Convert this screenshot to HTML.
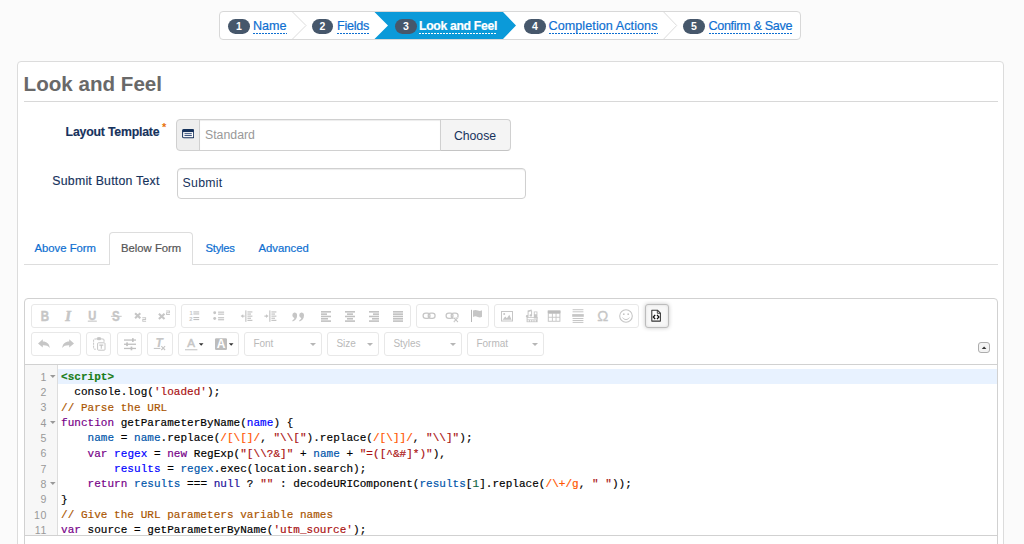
<!DOCTYPE html>
<html>
<head>
<meta charset="utf-8">
<style>
*{box-sizing:border-box;margin:0;padding:0}
html,body{width:1024px;height:544px;overflow:hidden;background:#fbfbfb;font-family:"Liberation Sans",sans-serif;font-size:13px;color:#16325c}
.abs{position:absolute}
/* wizard */
#wiz{position:absolute;left:219px;top:11px;width:582px;height:29px;border:1px solid #d8d8d8;border-radius:4px;background:#fff;overflow:hidden}
#wiz svg{position:absolute;left:0;top:0}
.badge{position:absolute;top:7.3px;width:21.6px;height:14.7px;border-radius:7.4px;background:#46576b;color:#fff;font-size:10.5px;font-weight:bold;text-align:center;line-height:14.7px}
.st{-webkit-text-stroke:0.2px;position:absolute;top:5px;font-size:12.6px;color:#0e6fd1;line-height:18.6px;white-space:nowrap;height:17px;background:repeating-linear-gradient(90deg,#0e6fd1 0,#0e6fd1 2px,transparent 2px,transparent 3px) left bottom/100% 1px no-repeat}
.st.act{color:#fff;font-weight:bold;background-image:repeating-linear-gradient(90deg,#fff 0,#fff 2px,transparent 2px,transparent 3px)}
/* panel */
#panel{position:absolute;left:17px;top:61px;width:987px;height:520px;border:1px solid #dcdcdc;border-radius:4px;background:#fff}
h1{position:absolute;left:4.6px;top:8.6px;font-size:20.6px;font-weight:bold;color:#696969;line-height:26px;white-space:nowrap}
.hr{position:absolute;left:5px;top:39px;width:974px;height:1px;background:#d8d8d8}
.lbl{-webkit-text-stroke:0.15px;position:absolute;right:843px;font-size:12.3px;white-space:nowrap;color:#16325c}
.inp{position:absolute;border:1px solid #d0d0d0;border-radius:4px;background:#fff;box-shadow:inset 0 1px 1px rgba(0,0,0,.075)}
/* tabs */
.tab{-webkit-text-stroke:0.2px;position:absolute;font-size:11.3px;color:#0e6fd1;white-space:nowrap;top:179px;line-height:14px}
/* editor */
#ed{position:absolute;left:5px;top:236px;width:974px;height:300px;border:1px solid #d1d1d1;border-radius:4px;background:#fff;overflow:hidden}
.grp{position:absolute;height:24px;border:1px solid #e8e8e8;border-radius:3px;background:#fff}
.combo{position:absolute;height:24px;border:1px solid #e8e8e8;border-radius:3px;background:#fff;font-size:10px;color:#b9b9b9;line-height:22.8px;padding-left:8.4px}
.combo i{position:absolute;right:5px;top:10px;width:0;height:0;border-left:3px solid transparent;border-right:3px solid transparent;border-top:3px solid #b6b6b6}
#ace{position:absolute;left:0;top:65px;width:972px;height:172px;border-top:1px solid #d1d1d1;border-bottom:1px solid #d1d1d1;background:#fff;font-family:"Liberation Mono",monospace;font-size:11px}
#gut{position:absolute;left:0;top:0;width:33px;height:100%;background:#f7f7f7;border-right:1px solid #ddd}
.ln{-webkit-text-stroke:0.18px;letter-spacing:0.035px;position:absolute;left:36px;height:15.33px;line-height:15.33px;white-space:pre;color:#000}
.gn{position:absolute;left:0;width:21.8px;text-align:right;height:15.33px;line-height:15.33px;color:#999;font-family:"Liberation Sans",sans-serif;font-size:10.6px;letter-spacing:.5px}
.k{color:#708}.d{color:#00f}.v{color:#05a}.s{color:#a11}.c{color:#a50}.r{color:#f50}.t{color:#1a7d1a;font-weight:bold}.n{color:#164}.a{color:#219}
</style>
</head>
<body>
<div id="wiz">
<svg width="580" height="27" viewBox="0 0 580 27">
<polyline points="72.5,0 86,13.5 72.5,27" fill="none" stroke="#dcdcdc" stroke-width="1"/>
<polygon points="154.5,0 283,0 296,13.5 283,27 154.5,27 168,13.5" fill="#0b9ad9"/>
<polyline points="443.7,0 456.7,13.5 443.7,27" fill="none" stroke="#dcdcdc" stroke-width="1"/>
</svg>
<div class="badge" style="left:8px">1</div><div class="st" style="left:33px">Name</div>
<div class="badge" style="left:91.5px">2</div><div class="st" style="left:117px;letter-spacing:-0.27px">Fields</div>
<div class="badge" style="left:175px">3</div><div class="st act" style="left:199px;font-size:12.2px;letter-spacing:-0.3px">Look and Feel</div>
<div class="badge" style="left:304px">4</div><div class="st" style="left:328.5px;letter-spacing:0.07px">Completion Actions</div>
<div class="badge" style="left:463px">5</div><div class="st" style="left:488.5px;letter-spacing:-0.33px">Confirm &amp; Save</div>
</div>
<div id="panel"><div class="abs" style="left:1px;top:0;width:984px;height:500px">
<h1>Look and Feel</h1>
<div class="hr"></div>
<div class="lbl" style="top:62px;font-weight:bold;line-height:16px;letter-spacing:-0.2px;right:843.6px">Layout Template</div>
<div class="abs" style="left:143px;top:59px;color:#e8720c;font-size:11px;line-height:12px;font-weight:bold">*</div>
<div class="abs" id="ig" style="left:157px;top:57px;width:335px;height:32px">
 <div class="abs" style="left:0;top:0;width:24px;height:32px;border:1px solid #d0d0d0;border-radius:4px 0 0 4px;background:#eee"></div>
 <svg class="abs" style="left:5.6px;top:10.4px" width="12.3" height="9.4" viewBox="0 0 13 10"><rect x="0.6" y="0.6" width="11.8" height="8.8" rx="1.2" fill="#fff" stroke="#16325c" stroke-width="1.1"/><rect x="0.6" y="0.6" width="11.8" height="2.7" fill="#16325c"/><rect x="2.6" y="4.4" width="7.8" height="1.1" fill="#3d5580"/><rect x="2.6" y="6.4" width="7.8" height="1.1" fill="#3d5580"/></svg>
 <div class="inp" style="left:23px;top:0;width:242px;height:32px;border-radius:0;color:#999;font-size:12.3px;line-height:31.6px;padding-left:5px">Standard</div>
 <div class="abs" style="left:264px;top:0;width:71px;height:32px;border:1px solid #d0d0d0;border-bottom-color:#c4c4c4;border-radius:0 4px 4px 0;background:#f4f4f4;font-size:12.25px;line-height:33.4px;padding-right:1px;text-align:center;color:#16325c">Choose</div>
</div>
<div class="lbl" style="top:111px;line-height:16px;letter-spacing:0.24px;right:843.4px">Submit Button Text</div>
<div class="inp" style="left:158px;top:106px;width:349px;height:31px;font-size:12.3px;line-height:29.6px;padding-left:4.5px;letter-spacing:.3px;color:#16325c">Submit</div>
<div class="abs" style="left:5px;top:202px;width:974px;height:1px;background:#ddd"></div>
<div class="abs" style="left:90px;top:170px;width:84px;height:33px;border:1px solid #ddd;border-bottom:0;border-radius:4px 4px 0 0;background:#fff"></div>
<div class="tab" style="left:15.5px">Above Form</div>
<div class="tab" style="left:102px;color:#555">Below Form</div>
<div class="tab" style="left:186.5px;letter-spacing:-0.25px">Styles</div>
<div class="tab" style="left:239.5px">Advanced</div>
<div id="ed">
<!--TB-->
<div class="grp" style="left:6px;top:5px;width:145px"></div>
<div class="grp" style="left:156px;top:5px;width:230px"></div>
<div class="grp" style="left:391px;top:5px;width:73px"></div>
<div class="grp" style="left:469px;top:5px;width:145px"></div>
<div class="grp" style="left:6px;top:33px;width:50px"></div>
<div class="grp" style="left:61px;top:33px;width:25px"></div>
<div class="grp" style="left:92px;top:33px;width:25px"></div>
<div class="grp" style="left:122px;top:33px;width:26px"></div>
<div class="grp" style="left:153px;top:33px;width:61px"></div>
<svg class="abs" style="left:213.7px;top:9.0px" width="16" height="16" viewBox="0 0 16 16" fill="#c6c6c6" stroke="none"><g fill="#c0c0c0"><rect x="6.3" y="2.4" width="1.1" height="11.4"/><rect x="8.4" y="3.4" width="5" height="1.1"/><rect x="8.4" y="5.5" width="3.6" height="1.1"/><rect x="8.4" y="7.6" width="5" height="1.1"/><rect x="8.4" y="9.7" width="3.6" height="1.1"/><rect x="8.4" y="11.8" width="5" height="1.1"/></g><path d="M1.6 8.1 L4.2 6.2 V7.5 H5.6 V8.7 H4.2 V10 Z"/></svg>
<svg class="abs" style="left:237.8px;top:9.0px" width="16" height="16" viewBox="0 0 16 16" fill="#c6c6c6" stroke="none"><g fill="#c0c0c0"><rect x="6.3" y="2.4" width="1.1" height="11.4"/><rect x="8.4" y="3.4" width="5" height="1.1"/><rect x="8.4" y="5.5" width="3.6" height="1.1"/><rect x="8.4" y="7.6" width="5" height="1.1"/><rect x="8.4" y="9.7" width="3.6" height="1.1"/><rect x="8.4" y="11.8" width="5" height="1.1"/></g><path d="M5.6 8.1 L3 6.2 V7.5 H1.4 V8.7 H3 V10 Z"/></svg>
<svg class="abs" style="left:265.2px;top:9.8px" width="16" height="16" viewBox="0 0 16 16" fill="#c6c6c6" stroke="none"><path d="M4.300000000000001 3.6 a2.8 2.8 0 0 1 2.8 2.9 c0 3 -1.7 5 -4.4 5.9 l-.5 -1 c1.3 -.7 2 -1.5 2.2 -2.5 a2.75 2.75 0 0 1 -.1 -5.3 z"/><path d="M11.2 3.6 a2.8 2.8 0 0 1 2.8 2.9 c0 3 -1.7 5 -4.4 5.9 l-.5 -1 c1.3 -.7 2 -1.5 2.2 -2.5 a2.75 2.75 0 0 1 -.1 -5.3 z"/></svg>
<svg class="abs" style="left:293.2px;top:9.0px" width="16" height="16" viewBox="0 0 16 16" fill="#c0c0c0" stroke="none"><rect x="3" y="3.05" width="10" height="1.55"/><rect x="3" y="5.37" width="6" height="1.55"/><rect x="3" y="7.69" width="10" height="1.55"/><rect x="3" y="10.01" width="7" height="1.55"/><rect x="3" y="12.33" width="10" height="1.55"/></svg>
<svg class="abs" style="left:317.0px;top:9.0px" width="16" height="16" viewBox="0 0 16 16" fill="#c0c0c0" stroke="none"><rect x="3" y="3.05" width="10" height="1.55"/><rect x="5" y="5.37" width="6" height="1.55"/><rect x="3" y="7.69" width="10" height="1.55"/><rect x="5" y="10.01" width="6" height="1.55"/><rect x="3" y="12.33" width="10" height="1.55"/></svg>
<svg class="abs" style="left:341.0px;top:9.0px" width="16" height="16" viewBox="0 0 16 16" fill="#c0c0c0" stroke="none"><rect x="3" y="3.05" width="10" height="1.55"/><rect x="7" y="5.37" width="6" height="1.55"/><rect x="3" y="7.69" width="10" height="1.55"/><rect x="6" y="10.01" width="7" height="1.55"/><rect x="3" y="12.33" width="10" height="1.55"/></svg>
<svg class="abs" style="left:364.7px;top:9.0px" width="16" height="16" viewBox="0 0 16 16" fill="#c0c0c0" stroke="none"><rect x="3" y="3.05" width="10" height="1.55"/><rect x="3" y="5.37" width="10" height="1.55"/><rect x="3" y="7.69" width="10" height="1.55"/><rect x="3" y="10.01" width="10" height="1.55"/><rect x="3" y="12.33" width="10" height="1.55"/></svg>
<svg class="abs" style="left:395.5px;top:8.5px" width="16" height="16" viewBox="0 0 16 16" fill="#c6c6c6" stroke="none"><g fill="none" stroke="#c6c6c6" stroke-width="1.25"><rect x="2.1" y="5" width="6.9" height="5.4" rx="2.7"/><rect x="7.2" y="5" width="6.9" height="5.4" rx="2.7"/></g></svg>
<svg class="abs" style="left:419.4px;top:8.5px" width="16" height="16" viewBox="0 0 16 16" fill="#c6c6c6" stroke="none"><g fill="none" stroke="#c6c6c6" stroke-width="1.25"><rect x="2.1" y="5" width="6.9" height="5.4" rx="2.7"/><rect x="7.2" y="5" width="6.9" height="5.4" rx="2.7"/></g><path d="M10.2 9.2 l1.6 1.7 l1.6 -1.7 l.9 .9 l-1.6 1.7 l1.6 1.7 l-.9 .9 l-1.6 -1.7 l-1.6 1.7 l-.9 -.9 l1.6 -1.7 l-1.6 -1.7 z" fill="#bdbdbd" stroke="#fff" stroke-width=".5"/></svg>
<svg class="abs" style="left:444.0px;top:8.5px" width="16" height="16" viewBox="0 0 16 16" fill="#c6c6c6" stroke="none"><rect x="2" y="1.8" width="1" height="12.2" fill="#b8b8b8"/><path d="M4 2.6 c2 -1.2 3.4 -.6 4.8 0 c1.4 .6 2.6 .8 4.2 -.3 v6.4 c-1.6 1.1 -2.8 .9 -4.2 .3 c-1.4 -.6 -2.8 -1.2 -4.8 0 z"/></svg>
<svg class="abs" style="left:473.7px;top:9.0px" width="16" height="16" viewBox="0 0 16 16" fill="#c6c6c6" stroke="none"><path d="M2 3 h12 v10.4 h-12 z M3 4 v8.4 h10 v-8.4 z" fill-rule="evenodd"/><path d="M3.6 11.8 l2.6 -3.2 l1.7 1.6 l2.4 -3.4 l2.3 5 z"/><circle cx="5.2" cy="6" r="1"/></svg>
<svg class="abs" style="left:498.2px;top:9.0px" width="16" height="16" viewBox="0 0 16 16" fill="#c6c6c6" stroke="none"><rect x="3.6" y="9" width="11" height="5.2"/><g fill="#fff"><rect x="4.6" y="12.2" width="1.3" height="1.2"/><rect x="6.9" y="12.2" width="1.3" height="1.2"/><rect x="9.2" y="12.2" width="1.3" height="1.2"/><rect x="11.5" y="12.2" width="1.3" height="1.2"/><rect x="4.6" y="9.8" width="9" height="1.6"/></g><path d="M4.6 2.6 l4 -1 v1.5 l-3 .8 v4.3 a1.4 1.2 0 1 1 -1 -1.1 z"/><path d="M8.1 2.4 h1 v5 a1.3 1.1 0 1 1 -1 -1z"/><path d="M10.8 3.4 h3.6 v7 h-3.6 z M11.7 4.3 v2 h1.8 v-2z" fill-rule="evenodd"/></svg>
<svg class="abs" style="left:521.3px;top:9.0px" width="16" height="16" viewBox="0 0 16 16" fill="#c6c6c6" stroke="none"><path d="M1.8 2.6 h12.6 v11.2 h-12.6 z" /><rect x="1.8" y="2.6" width="12.6" height="2.6" fill="#bcbcbc"/><g fill="#fff"><rect x="2.8" y="5.8" width="3.1" height="3"/><rect x="6.8" y="5.8" width="2.8" height="3"/><rect x="10.5" y="5.8" width="2.9" height="3"/><rect x="2.8" y="9.7" width="3.1" height="3.1"/><rect x="6.8" y="9.7" width="2.8" height="3.1"/><rect x="10.5" y="9.7" width="2.9" height="3.1"/></g></svg>
<svg class="abs" style="left:545.4px;top:9.0px" width="16" height="16" viewBox="0 0 16 16" fill="#c6c6c6" stroke="none"><rect x="2.6" y="1.2" width="10.8" height="1"/><rect x="2.6" y="3.3" width="10.8" height="1"/><rect x="2.2" y="6.1" width="11.6" height="2.7"/><rect x="2.6" y="10" width="10.8" height="1"/><rect x="2.6" y="12" width="10.8" height="1"/><rect x="2.6" y="13.9" width="10.8" height="1"/></svg>
<svg class="abs" style="left:593.2px;top:9.0px" width="16" height="16" viewBox="0 0 16 16" fill="#c6c6c6" stroke="none"><circle cx="8" cy="8" r="6.3" fill="none" stroke="#c6c6c6" stroke-width="1.1"/><circle cx="5.8" cy="6.2" r=".9"/><circle cx="10.2" cy="6.2" r=".9"/><path d="M4.6 9.6 c1.8 2.6 5 2.6 6.8 0" fill="none" stroke="#c6c6c6" stroke-width="1"/></svg>
<div class="abs" style="left:620px;top:5px;width:24px;height:24px;border:1px solid #bcbcbc;border-radius:3px;background:#f7f7f7;box-shadow:0 0 4px rgba(0,0,0,.22), inset 0 0 3px rgba(0,0,0,.10)"></div>
<svg class="abs" style="left:11.399999999999999px;top:37.4px" width="16" height="16" viewBox="0 0 16 16" fill="#c6c6c6" stroke="none"><path d="M2 7.4 L6.8 3.2 V5.6 C10.8 5.6 13.4 7.8 13.8 12 C12.2 9.9 10.2 9.2 6.8 9.3 V11.6 Z"/></svg>
<svg class="abs" style="left:34.9px;top:37.4px" width="16" height="16" viewBox="0 0 16 16" fill="#c6c6c6" stroke="none"><path d="M14 7.4 L9.2 3.2 V5.6 C5.2 5.6 2.6 7.8 2.2 12 C3.8 9.9 5.8 9.2 9.2 9.3 V11.6 Z"/></svg>
<svg class="abs" style="left:66.4px;top:37.0px" width="16" height="16" viewBox="0 0 16 16" fill="#c6c6c6" stroke="none"><g fill="none" stroke="#c6c6c6" stroke-width="1"><path d="M5.6 3 H3.6 a1 1 0 0 0 -1 1 V12.2 a1 1 0 0 0 1 1 H5.6" stroke-dasharray="2.2 .8"/><path d="M10.4 3 h1.6 a1 1 0 0 1 1 1 v1.8"/><rect x="6.1" y="1.7" width="3.8" height="2" rx=".8" fill="#c6c6c6"/><rect x="6.6" y="6.8" width="7.4" height="7.4" rx=".8"/></g><path d="M8.3 8.6 h4 v1.1 h-1.45 v3 h-1.1 v-3 h-1.45 z"/></svg>
<svg class="abs" style="left:96.6px;top:37.0px" width="16" height="16" viewBox="0 0 16 16" fill="#c6c6c6" stroke="none"><g fill="#c0c0c0"><rect x="2" y="3.4" width="12" height="1.3"/><rect x="2" y="7.6" width="12" height="1.3"/><rect x="2" y="11.8" width="12" height="1.3"/><rect x="10" y="2.2" width="1.7" height="3.7"/><rect x="4.2" y="6.4" width="1.7" height="3.7"/><rect x="8.6" y="10.6" width="1.7" height="3.7"/></g></svg>
<svg class="abs" style="left:187.7px;top:36.8px" width="16" height="16" viewBox="0 0 16 16" fill="#c6c6c6" stroke="none"><rect x="2" y="2.2" width="12" height="11.8" rx="1.2" fill="#bdbdbd"/><text x="8" y="12.4" text-anchor="middle" style="font-family:'Liberation Sans',sans-serif" font-weight="bold" font-size="12" fill="#fff">A</text></svg>
<div class="combo" style="left:219px;top:33px;width:78px">Font<i></i></div>
<div class="combo" style="left:302px;top:33px;width:52px">Size<i></i></div>
<div class="combo" style="left:359px;top:33px;width:78px">Styles<i></i></div>
<div class="combo" style="left:442px;top:33px;width:77px">Format<i></i></div>
<div class="abs" style="left:953px;top:43px;width:12px;height:11px;border:1px solid #adadad;border-radius:3px;background:#f3f3f3"></div>
<svg class="abs" style="left:0;top:0" width="972" height="64" viewBox="0 0 972 64" fill="#c6c6c6"><text x="0" y="0" text-anchor="middle" style="font-family:'Liberation Sans';font-size:14.4px;font-weight:bold" stroke="#c6c6c6" stroke-width="0.5" transform="translate(19.8,22) scale(.80,1)">B</text><text x="0" y="0" text-anchor="middle" style="font-family:'Liberation Serif';font-size:14.6px;font-weight:bold;font-style:italic" stroke="#c6c6c6" stroke-width="0.6" transform="translate(43.2,22)">I</text><text x="0" y="0" text-anchor="middle" style="font-family:'Liberation Sans';font-size:12.4px;font-weight:bold" stroke="#c6c6c6" stroke-width="0.4" transform="translate(67.3,20.6) scale(.9,1)">U</text><rect x="62.8" y="21.6" width="9" height="1.1"/><text x="0" y="0" text-anchor="middle" style="font-family:'Liberation Sans';font-size:14.2px;font-weight:bold" stroke="#c6c6c6" stroke-width="0.3" transform="translate(90.8,22) scale(.82,1)">S</text><rect x="85.9" y="16.8" width="10.8" height="1"/><path d="M110.10000000000001 14.2 L115.3 19.3 M115.3 14.2 L110.10000000000001 19.3" fill="none" stroke="#c6c6c6" stroke-width="2.1"/><path d="M117.3 18.3 h3.8 v2.6500000000000004 h-2.9 v0.8500000000000001 h2.9 v0.9 h-3.8 v-2.6500000000000004 h2.9 v-0.8500000000000001 h-2.9 z"/><path d="M133.89999999999998 14.7 L139.5 20.1 M139.5 14.7 L133.89999999999998 20.1" fill="none" stroke="#c6c6c6" stroke-width="2.1"/><path d="M141.1 11.6 h3.8 v2.6500000000000004 h-2.9 v0.8500000000000001 h2.9 v0.9 h-3.8 v-2.6500000000000004 h2.9 v-0.8500000000000001 h-2.9 z"/><rect x="168.4" y="12.4" width="5.8" height="1.1" fill="#c0c0c0"/><rect x="193.1" y="12.6" width="6" height="1.1" fill="#c0c0c0"/><rect x="168.4" y="14.4" width="5.8" height="1.1" fill="#c0c0c0"/><rect x="193.1" y="14.6" width="6" height="1.1" fill="#c0c0c0"/><rect x="168.4" y="18.0" width="5.8" height="1.1" fill="#c0c0c0"/><rect x="193.1" y="18.2" width="6" height="1.1" fill="#c0c0c0"/><rect x="168.4" y="20.0" width="5.8" height="1.1" fill="#c0c0c0"/><rect x="193.1" y="20.2" width="6" height="1.1" fill="#c0c0c0"/><text x="164.6" y="16" style="font-family:'Liberation Sans';font-size:5.6px;font-weight:bold">1</text><text x="164.2" y="22" style="font-family:'Liberation Sans';font-size:5.8px;font-weight:bold">2</text><circle cx="189.7" cy="13.8" r="1.45"/><circle cx="189.7" cy="19.5" r="1.45"/><text x="577.7" y="22.3" text-anchor="middle" style="font-family:'Liberation Sans';font-size:14.8px;" stroke="#c6c6c6" stroke-width="0.3" >&#937;</text><path d="M626.8 11.2 h5.6 l3 3 v7.9 h-8.6 z" fill="#fff" stroke="#333" stroke-width="1.05" stroke-linejoin="round"/><path d="M632.3 11.3 v3 h3" fill="none" stroke="#333" stroke-width=".9"/><path d="M630.2 15.9 l-1.9 2.1 l1.9 2.1 M632 15.9 l1.9 2.1 l-1.9 2.1" fill="none" stroke="#111" stroke-width="1.3"/><text x="134.2" y="48.4" text-anchor="middle" style="font-family:'Liberation Sans';font-size:12px;font-weight:bold;font-style:italic" stroke="#c6c6c6" stroke-width="0.2" >T</text><rect x="128.8" y="48.9" width="6.6" height="1.1"/><path d="M135.9 47.6 l.8 -.8 l1.5 1.5 l1.5 -1.5 l.8 .8 l-1.5 1.5 l1.5 1.5 l-.8 .8 l-1.5 -1.5 l-1.5 1.5 l-.8 -.8 l1.5 -1.5 z"/><text x="166.2" y="48.4" text-anchor="middle" style="font-family:'Liberation Sans';font-size:11.6px;" stroke="#c6c6c6" stroke-width="0.5" >A</text><rect x="160" y="50.2" width="12.4" height="1.1"/><path d="M173.9 44.2 h4.6 l-2.3 2.5 z" fill="#333"/><path d="M203.9 44.2 h4.6 l-2.3 2.5 z" fill="#333"/><path d="M956.8 49.9 h4.6 l-2.3 -2.4 z" fill="#333"/></svg>
<!--/TB-->
<div id="ace">
<!--CD-->
<div class="abs" style="left:33px;top:4px;width:939px;height:15.2px;background:#e8f2ff"></div>
<div id="gut"></div>
<div class="gn" style="top:4.70px">1</div>
<svg class="abs" style="left:24.7px;top:10.10px" width="6" height="4" viewBox="0 0 6 4"><path d="M0 0 h5.6 l-2.8 3 z" fill="#999"/></svg>
<div class="ln" style="top:5.10px"><span class="t">&lt;script&gt;</span></div>
<div class="gn" style="top:20.03px">2</div>
<div class="ln" style="top:20.43px">  console.log(<span class="s">&#x27;loaded&#x27;</span>);</div>
<div class="gn" style="top:35.36px">3</div>
<div class="ln" style="top:35.76px"><span class="c">// Parse the URL</span></div>
<div class="gn" style="top:50.69px">4</div>
<svg class="abs" style="left:24.7px;top:56.09px" width="6" height="4" viewBox="0 0 6 4"><path d="M0 0 h5.6 l-2.8 3 z" fill="#999"/></svg>
<div class="ln" style="top:51.09px"><span class="k">function</span> getParameterByName(<span class="d">name</span>) {</div>
<div class="gn" style="top:66.02px">5</div>
<div class="ln" style="top:66.42px">    <span class="v">name</span> = <span class="v">name</span>.replace(<span class="r">/[\[]/</span>, <span class="s">&quot;\\[&quot;</span>).replace(<span class="r">/[\]]/</span>, <span class="s">&quot;\\]&quot;</span>);</div>
<div class="gn" style="top:81.35px">6</div>
<div class="ln" style="top:81.75px">    <span class="k">var</span> <span class="d">regex</span> = <span class="k">new</span> RegExp(<span class="s">&quot;[\\?&amp;]&quot;</span> + <span class="v">name</span> + <span class="s">&quot;=([^&amp;#]*)&quot;</span>),</div>
<div class="gn" style="top:96.68px">7</div>
<div class="ln" style="top:97.08px">        <span class="d">results</span> = <span class="v">regex</span>.exec(location.search);</div>
<div class="gn" style="top:112.01px">8</div>
<svg class="abs" style="left:24.7px;top:117.41px" width="6" height="4" viewBox="0 0 6 4"><path d="M0 0 h5.6 l-2.8 3 z" fill="#999"/></svg>
<div class="ln" style="top:112.41px">    <span class="k">return</span> <span class="v">results</span> === <span class="a">null</span> ? <span class="s">&quot;&quot;</span> : decodeURIComponent(<span class="v">results</span>[<span class="n">1</span>].replace(<span class="r">/\+/g</span>, <span class="s">&quot; &quot;</span>));</div>
<div class="gn" style="top:127.34px">9</div>
<div class="ln" style="top:127.74px">}</div>
<div class="gn" style="top:142.67px">10</div>
<div class="ln" style="top:143.07px"><span class="c">// Give the URL parameters variable names</span></div>
<div class="gn" style="top:158.00px">11</div>
<div class="ln" style="top:158.40px"><span class="k">var</span> source = getParameterByName(<span class="s">&#x27;utm_source&#x27;</span>);</div>
<!--/CD-->
</div></div>
</div></div>
</body>
</html>
